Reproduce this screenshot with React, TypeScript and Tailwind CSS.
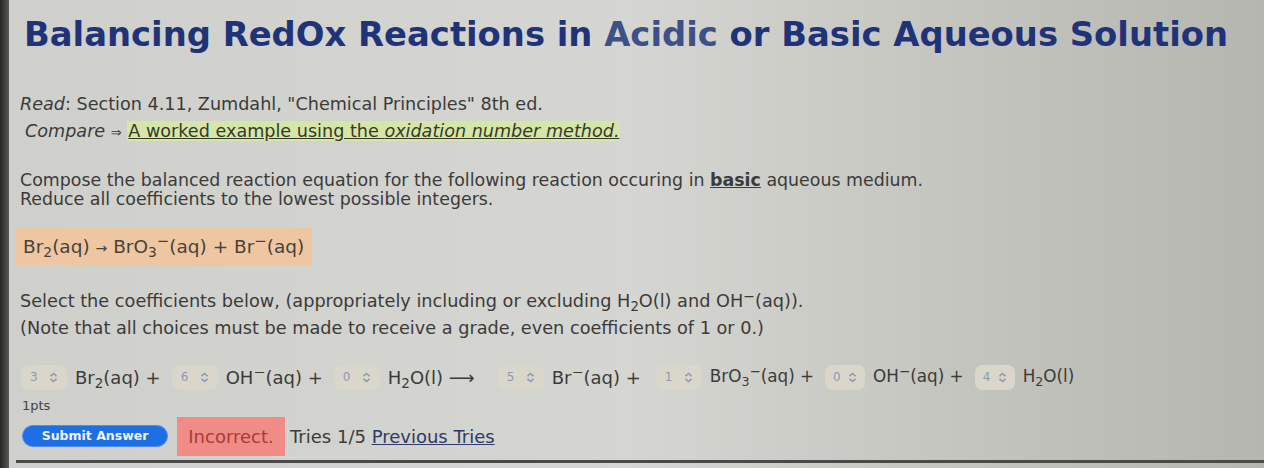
import React from 'react';

const font = { fontFamily: '"DejaVu Sans", Verdana, sans-serif' };

const Coef: React.FC<{ value: string; first?: boolean; narrow?: boolean }> = ({ value, first, narrow }) => (
  <span
    className={[
      'inline-flex items-center justify-between h-[25px] mr-[8px] rounded-[7px] bg-[#d9d6ca]',
      first ? 'ml-[1px]' : 'ml-[11px]',
      narrow ? 'w-[40px] px-[8px]' : 'w-[46px] px-[9px]',
    ].join(' ')}
  >
    <span className="text-[12px] text-[#8d9ab2]">{value}</span>
    <svg width="9" height="11" viewBox="0 0 9 11" fill="none" stroke="#8d9ab2" strokeWidth="1.6">
      <path d="M1.5 4.2 L4.5 1.5 L7.5 4.2" />
      <path d="M1.5 6.8 L4.5 9.5 L7.5 6.8" />
    </svg>
  </span>
);

const Sub: React.FC<{ children: React.ReactNode }> = ({ children }) => (
  <sub className="text-[0.75em] bottom-[-0.3em]">{children}</sub>
);

const Sup: React.FC = () => <sup className="text-[0.8em] top-[-0.45em]">−</sup>;

const App: React.FC = () => {
  return (
    <div
      className="flex w-[1264px] h-[468px] overflow-hidden bg-gradient-to-r from-[#cfcfcb] via-[#d5d5d1] to-[#b6b6b0] text-[#3b3b3b]"
      style={font}
    >
      {/* dark bezel edge */}
      <div className="w-[9px] bg-gradient-to-r from-[#262626] to-[#5a5a58] flex-shrink-0" />

      <div className="flex-1 flex flex-col pl-[11px]">
        <h1 className="mt-[12px] ml-[4px] text-[33.8px] font-bold text-[#1f3379] leading-[46px]">
          Balancing RedOx Reactions in <span className="text-[#3d5088]">Acidic</span> or Basic Aqueous Solution
        </h1>

        <div className="mt-[33px] text-[17.6px] leading-[27px]">
          <p>
            <i>Read</i>: Section 4.11, Zumdahl, "Chemical Principles" 8th ed.
          </p>
          <p className="ml-[5px]">
            <i>Compare</i> <span className="text-[13px]">⇒</span>{' '}
            <a className="underline text-[#343a2a] bg-[#d7e6a8] px-[1px]">
              A worked example using the <i>oxidation number method.</i>
            </a>
          </p>
        </div>

        <div className="mt-[25px] text-[17.4px] leading-[19px]">
          <p>
            Compose the balanced reaction equation for the following reaction occuring in{' '}
            <b className="underline">basic</b> aqueous medium.
          </p>
          <p>Reduce all coefficients to the lowest possible integers.</p>
        </div>

        <div className="mt-[19px] self-start -ml-[5px] px-[8px] h-[38px] flex items-center bg-[#eec7a2] text-[18.5px] text-[#4a4238]">
          <span>
            Br<Sub>2</Sub>(aq) <span className="text-[14px]">→</span> BrO<Sub>3</Sub>
            <Sup />(aq) + Br<Sup />(aq)
          </span>
        </div>

        <div className="mt-[22px] text-[17.7px] leading-[27px]">
          <p>
            Select the coefficients below, (appropriately including or excluding H<Sub>2</Sub>O(l) and OH
            <Sup />(aq)).
          </p>
          <p>(Note that all choices must be made to receive a grade, even coefficients of 1 or 0.)</p>
        </div>

        <div className="mt-[22px] flex items-center text-[18px] h-[26px] whitespace-nowrap">
          <Coef value="3" first />
          <span>Br<Sub>2</Sub>(aq) +</span>
          <Coef value="6" />
          <span>OH<Sup />(aq) +</span>
          <Coef value="0" />
          <span>
            H<Sub>2</Sub>O(l) <span className="text-[18px]">⟶</span>
          </span>
          <span className="w-[12px]" />
          <Coef value="5" />
          <span>Br<Sup />(aq) +</span>
          <span className="w-[4px]" />
          <Coef value="1" />
          <span className="text-[16.8px]">BrO<Sub>3</Sub><Sup />(aq) +</span>
          <Coef value="0" narrow />
          <span className="text-[16.8px]">OH<Sup />(aq) +</span>
          <Coef value="4" narrow />
          <span className="text-[16.8px]">H<Sub>2</Sub>O(l)</span>
        </div>

        <div className="mt-[6px] ml-[2px] text-[13px] text-[#444]">1pts</div>

        <div className="mt-[1px] flex items-center gap-[9px]">
          <button className="ml-[2px] w-[146px] h-[22px] rounded-full bg-[#1e6ee6] border border-[#4a8ff0] text-[#eef4ff] text-[12.5px] font-bold">
            Submit Answer
          </button>
          <span className="h-[39px] w-[108px] flex items-center justify-center bg-[#ef8c86] text-[#a93a3a] text-[18px]">
            Incorrect.
          </span>
          <span className="text-[18px] -ml-[4px]">
            Tries 1/5 <span className="underline text-[#2f3a66]">Previous Tries</span>
          </span>
        </div>

        <div className="mt-[4px] -ml-[4px] h-[3px] bg-[#4a4a48]" />
      </div>
    </div>
  );
};

export default App;
